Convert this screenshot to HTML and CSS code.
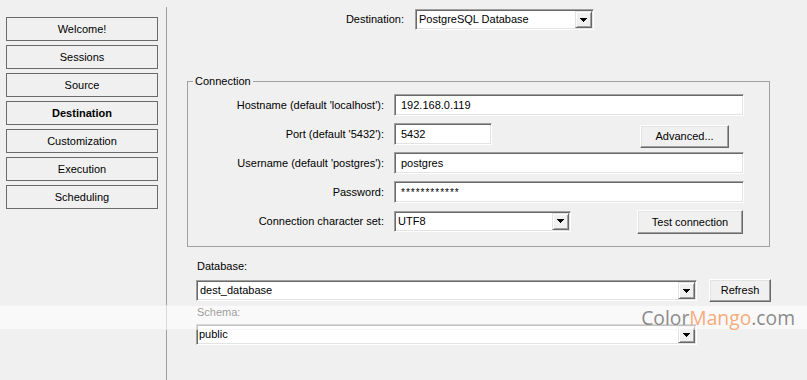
FILE: index.html
```html
<!DOCTYPE html>
<html lang="en">
<head>
<meta charset="utf-8">
<title>Destination</title>
<link rel="stylesheet" href="styles.css">
</head>
<body>
<div class="app">
  <nav class="sidebar">
    <div class="nav-btn">Welcome!</div>
    <div class="nav-btn">Sessions</div>
    <div class="nav-btn">Source</div>
    <div class="nav-btn nav-active">Destination</div>
    <div class="nav-btn">Customization</div>
    <div class="nav-btn">Execution</div>
    <div class="nav-btn">Scheduling</div>
  </nav>
  <div class="divider"></div>
  <main class="main">
    <div class="dest-row">
      <span class="dest-label">Destination:</span>
      <div class="combo combo-dest">
        <span class="combo-value">PostgreSQL Database</span>
        <span class="drop"><svg width="7" height="4" viewBox="0 0 7 4"><path d="M0 0h7v1H0zM1 1h5v1H1zM2 2h3v1H2zM3 3h1v1H3z" fill="#000"/></svg></span>
      </div>
    </div>

    <fieldset class="group">
      <legend class="group-title">Connection</legend>
      <div class="form">
        <span class="form-label">Hostname (default 'localhost'):</span>
        <div class="cell"><div class="edit edit-wide">192.168.0.119</div></div>

        <span class="form-label">Port (default '5432'):</span>
        <div class="cell">
          <div class="edit edit-port">5432</div>
          <div class="btn btn-advanced">Advanced...</div>
        </div>

        <span class="form-label">Username (default 'postgres'):</span>
        <div class="cell"><div class="edit edit-wide">postgres</div></div>

        <span class="form-label">Password:</span>
        <div class="cell"><div class="edit edit-wide edit-pass">************</div></div>

        <span class="form-label">Connection character set:</span>
        <div class="cell">
          <div class="combo combo-charset">
            <span class="combo-value">UTF8</span>
            <span class="drop"><svg width="7" height="4" viewBox="0 0 7 4"><path d="M0 0h7v1H0zM1 1h5v1H1zM2 2h3v1H2zM3 3h1v1H3z" fill="#000"/></svg></span>
          </div>
          <div class="btn btn-test">Test connection</div>
        </div>
      </div>
    </fieldset>

    <section class="db">
      <div class="field-label">Database:</div>
      <div class="db-row">
        <div class="combo combo-db">
          <span class="combo-value">dest_database</span>
          <span class="drop"><svg width="7" height="4" viewBox="0 0 7 4"><path d="M0 0h7v1H0zM1 1h5v1H1zM2 2h3v1H2zM3 3h1v1H3z" fill="#000"/></svg></span>
        </div>
        <div class="btn btn-refresh">Refresh</div>
      </div>
      <div class="field-label field-label-schema">Schema:</div>
      <div class="combo combo-db combo-schema">
        <span class="combo-value">public</span>
        <span class="drop"><svg width="7" height="4" viewBox="0 0 7 4"><path d="M0 0h7v1H0zM1 1h5v1H1zM2 2h3v1H2zM3 3h1v1H3z" fill="#000"/></svg></span>
      </div>
    </section>
  </main>
  <div class="watermark"><span class="wm-gray">Color</span><span class="wm-orange">Mango</span><span class="wm-gray">.com</span></div>
</div>
</body>
</html>
```
FILE: styles.css
```css
* { box-sizing: border-box; }

html, body {
  margin: 0;
  padding: 0;
  background: #f0f0f0;
}

body {
  font-family: "Liberation Sans", Arial, sans-serif;
  font-size: 11px;
  color: #000;
  line-height: 13px;
}

.app {
  position: relative;
  display: flex;
  width: 807px;
  height: 380px;
  overflow: hidden;
}

/* ---------- sidebar ---------- */
.sidebar {
  width: 166px;
  flex: none;
  padding: 17px 0 0 6px;
  display: flex;
  flex-direction: column;
  gap: 4px;
}

.nav-btn {
  width: 152px;
  height: 24px;
  border: 1px solid #6a6a6a;
  display: flex;
  align-items: center;
  justify-content: center;
  padding-top: 1px;
}

.nav-active { font-weight: bold; }

.divider {
  width: 1px;
  flex: none;
  margin-top: 7px;
  background: #a0a0a0;
}

/* ---------- main ---------- */
.main {
  flex: 1;
  padding-left: 20px;
}

.dest-row {
  display: flex;
  align-items: center;
  gap: 11px;
  margin-top: 9px;
}

.dest-label {
  width: 217px;
  text-align: right;
}

/* ---------- win controls ---------- */
.combo {
  display: flex;
  align-items: stretch;
  height: 21px;
  background: #fff;
  border: 1px solid;
  border-color: #a0a0a0 #fff #fff #a0a0a0;
  box-shadow: inset 1px 1px 0 #696969, inset -1px -1px 0 #e3e3e3;
  padding: 1px;
}

.combo-value {
  flex: 1;
  display: flex;
  align-items: center;
  padding-left: 2px;
  white-space: nowrap;
}

.drop {
  width: 17px;
  flex: none;
  display: flex;
  align-items: center;
  justify-content: center;
  background: #f0f0f0;
  border: 1px solid;
  border-color: #e3e3e3 #696969 #696969 #e3e3e3;
  box-shadow: inset 1px 1px 0 #fff, inset -1px -1px 0 #a0a0a0;
}

.drop svg { display: block; }

.edit {
  height: 22px;
  background: #fff;
  border: 1px solid;
  border-color: #a0a0a0 #fff #fff #a0a0a0;
  box-shadow: inset 1px 1px 0 #696969, inset -1px -1px 0 #e3e3e3;
  padding: 0 0 0 6px;
  display: flex;
  align-items: center;
  white-space: nowrap;
}

.btn {
  height: 23px;
  background: #f0f0f0;
  border: 1px solid;
  border-color: #fff #696969 #696969 #fff;
  box-shadow: inset -1px -1px 0 #a0a0a0, inset 1px 1px 0 #e3e3e3;
  display: flex;
  align-items: center;
  justify-content: center;
  white-space: nowrap;
}

.combo-dest { width: 179px; }

/* ---------- connection group ---------- */
.group {
  width: 583px;
  min-width: 0;
  margin: 45px 0 0 0;
  padding: 0 0 14px 0;
  border: 1px solid #a0a0a0;
}

.group-title {
  margin-left: 5px;
  padding: 0 2px;
  line-height: 13px;
}

.form {
  display: grid;
  grid-template-columns: 196px 350px;
  grid-auto-rows: 22px;
  column-gap: 10px;
  row-gap: 7px;
  align-items: center;
  padding-top: 6px;
}

.form-label {
  text-align: right;
  white-space: nowrap;
}

.cell {
  display: flex;
  align-items: center;
  height: 22px;
}

.edit-wide { width: 350px; }
.edit-port { width: 98px; }
.edit-pass { letter-spacing: 1px; font-size: 10px; }

.btn-advanced {
  width: 89px;
  margin-left: auto;
  margin-right: 15px;
  position: relative;
  top: 2px;
}

.combo-charset { width: 177px; }

.btn-test {
  width: 106px;
  margin-left: auto;
  margin-right: 1px;
  height: 24px;
  position: relative;
  top: 1px;
}

/* ---------- database ---------- */
.db {
  margin: 13px 0 0 9px;
}

.field-label { padding-left: 1px; }

.db-row {
  display: flex;
  align-items: center;
  gap: 12px;
  margin: 6px 0 4px;
}

.combo-db { width: 501px; }

.btn-refresh { width: 62px; }

.field-label-schema { margin-bottom: 5px; }

.combo-schema .combo-value { padding-left: 1px; }

/* ---------- watermark ---------- */
.watermark {
  position: absolute;
  left: 0;
  right: 0;
  top: 305px;
  height: 25px;
  background: rgba(255, 255, 255, 0.6);
  border-top: 1px solid rgba(0, 0, 0, 0.03);
  border-bottom: 1px solid rgba(0, 0, 0, 0.03);
  display: flex;
  align-items: center;
  justify-content: flex-end;
  padding-right: 12px;
  font-family: "Open Sans", "Liberation Sans", sans-serif;
  font-size: 19.3px;
  line-height: 25px;
}

.wm-gray { color: #8c8c8c; }
.wm-orange { color: #f6ab7c; }
```
